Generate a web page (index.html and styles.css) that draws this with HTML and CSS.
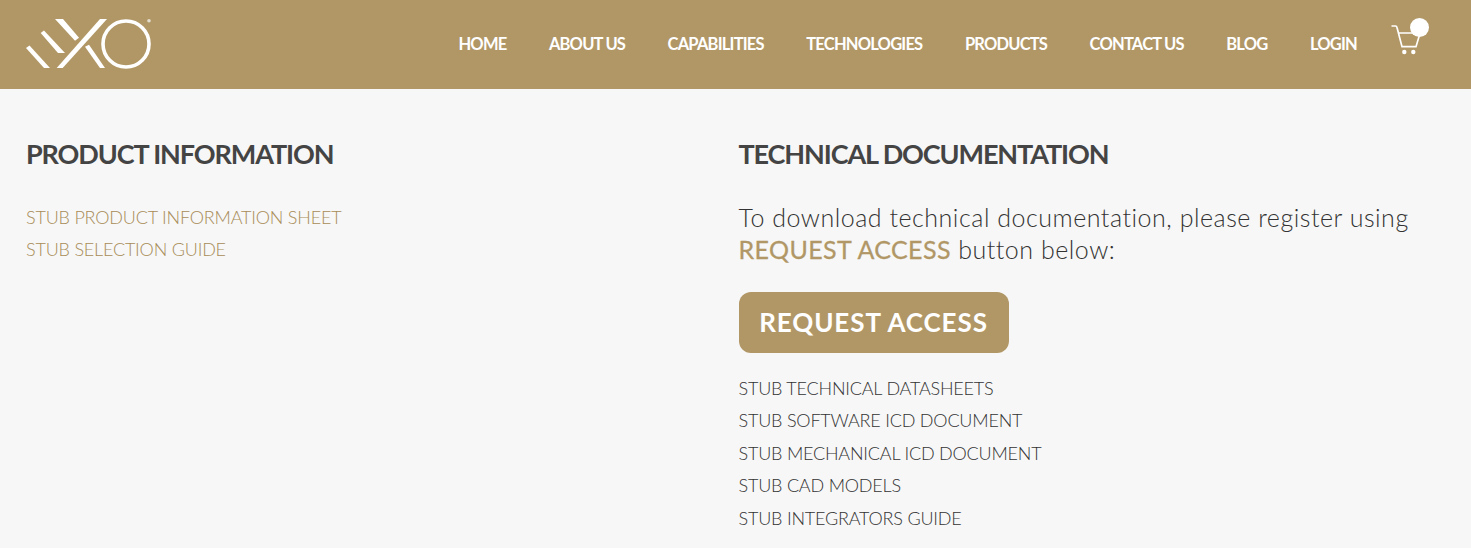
FILE: index.html
```html
<!DOCTYPE html>
<html lang="en">
<head>
<meta charset="utf-8">
<title>Stub</title>
<link rel="stylesheet" href="styles.css">
</head>
<body>
<header class="topbar">
  <a class="logo" href="#" aria-label="logo">
    <svg width="128" height="54" viewBox="0 0 128 54">
      <g fill="#fff">
        <path d="M0 29 L3.500 26.500 L24 49 L18 49 Z"/>
        <path d="M14.700 14 L18 11.500 L39 34 L32 34 Z"/>
        <path d="M29 0 L37 0 L53 18.700 L49 21.700 Z"/>
        <path d="M30.700 49 L74 0 L81 0 L36.700 49 Z"/>
        <path d="M59 27.700 L63 25.700 L79 49 L74 49 Z"/>
      </g>
      <circle cx="100" cy="25" r="23" fill="none" stroke="#fff" stroke-width="3.600"/>
      <circle cx="123" cy="1.800" r="1.800" fill="#e4dccd"/>
    </svg>
  </a>
  <nav class="nav">
    <a href="#">HOME</a>
    <a href="#">ABOUT US</a>
    <a href="#">CAPABILITIES</a>
    <a href="#">TECHNOLOGIES</a>
    <a href="#">PRODUCTS</a>
    <a href="#">CONTACT US</a>
    <a href="#">BLOG</a>
    <a href="#">LOGIN</a>
  </nav>
  <a class="cart" href="#" aria-label="cart">
    <svg width="40" height="40" viewBox="0 0 40 40">
      <path d="M0.500 11 H4.500 Q5.700 11 6 12.500 L11 31.700 H25 L28.500 20 M7.500 18 H28" fill="none" stroke="#fff" stroke-width="1.700"/>
      <circle cx="13.300" cy="37" r="2.200" fill="#fff"/>
      <circle cx="22.300" cy="37" r="2.200" fill="#fff"/>
    </svg>
    <span class="badge"></span>
  </a>
</header>
<main class="columns">
  <section class="col">
    <h2>PRODUCT INFORMATION</h2>
    <ul class="links gold">
      <li><a href="#">STUB PRODUCT INFORMATION SHEET</a></li>
      <li><a href="#">STUB SELECTION GUIDE</a></li>
    </ul>
  </section>
  <section class="col">
    <h2>TECHNICAL DOCUMENTATION</h2>
    <p class="lead">To download technical documentation, please register using <a href="#">REQUEST ACCESS</a> button below:</p>
    <a class="btn" href="#">REQUEST ACCESS</a>
    <ul class="links dark">
      <li><a href="#">STUB TECHNICAL DATASHEETS</a></li>
      <li><a href="#">STUB SOFTWARE ICD DOCUMENT</a></li>
      <li><a href="#">STUB MECHANICAL ICD DOCUMENT</a></li>
      <li><a href="#">STUB CAD MODELS</a></li>
      <li><a href="#">STUB INTEGRATORS GUIDE</a></li>
    </ul>
  </section>
</main>
</body>
</html>
```
FILE: styles.css
```css
* { box-sizing: border-box; }
html, body { margin: 0; height: 100%; overflow: hidden; }
body { background: #f7f7f7; font-family: Lato, "Liberation Sans", sans-serif; color: #444; }
a { text-decoration: none; color: inherit; }
.topbar { height: 89px; background: #b19766; display: flex; align-items: flex-start; padding: 0 40px 0 26px; }
.logo { margin-top: 19px; display: block; height: 54px; }
.nav { display: flex; gap: 42.500px; margin-left: auto; margin-top: 34px; font-size: 16.500px; font-weight: 700; line-height: 20px; color: #fff; letter-spacing: -0.800px; }
.cart { position: relative; margin-left: 34px; margin-top: 15px; width: 40px; height: 40px; display: block; }
.badge { position: absolute; right: 2px; top: 3px; width: 19px; height: 19px; border-radius: 50%; background: #fff; }
.columns { display: grid; grid-template-columns: 712.500px 1fr; padding: 0 26px; }
h2 { margin: 48px 0 0; font-size: 27px; line-height: 34px; font-weight: 700; color: #444; letter-spacing: -1.100px; }
.links { list-style: none; margin: 0; padding: 0; font-size: 18px; font-weight: 300; line-height: 32.400px; letter-spacing: -0.200px; }
.col > h2 + .links { margin-top: 30px; }
.gold { color: #a88c58; }
.dark { color: #333; margin-top: 19px; }
.lead { margin: 30px 0 0; font-size: 25px; font-weight: 300; line-height: 32px; letter-spacing: 0.520px; max-width: 700px; color: #333; }
.lead a { color: #b19766; font-weight: 400; letter-spacing: 0.400px; -webkit-text-stroke: 0.300px #b19766; }
.btn { display: inline-block; margin-top: 27px; height: 61px; line-height: 60px; width: 270px; text-align: center; background: #b19766; color: #fff; border-radius: 12px; font-size: 26px; font-weight: 700; letter-spacing: 0.900px; }
```
